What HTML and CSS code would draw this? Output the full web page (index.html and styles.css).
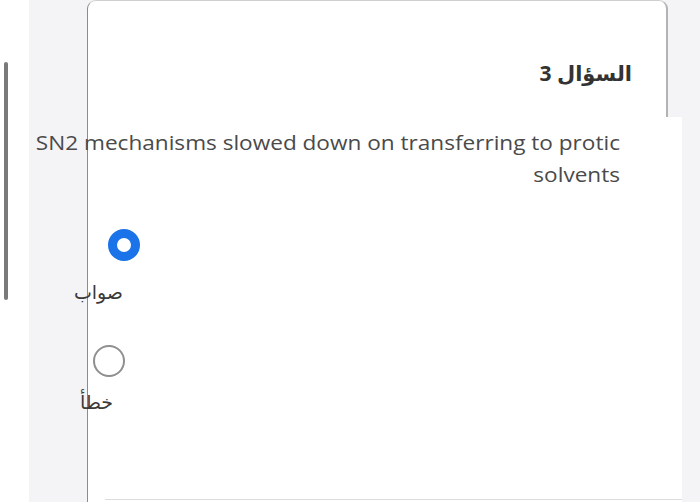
FILE: index.html
```html
<!DOCTYPE html>
<html lang="ar">
<head>
<meta charset="utf-8">
<link rel="stylesheet" href="styles.css">
</head>
<body>
<div class="page">
  <div class="rail"><div class="bar"></div></div>
  <div class="main">
    <div class="card-head">
      <h2 class="q-title" dir="rtl">السؤال 3</h2>
    </div>
    <div class="card-body">
      <p class="q-text">SN2 mechanisms slowed down on transferring to protic solvents</p>
      <div class="option opt-true">
        <span class="radio checked"></span>
        <span class="label" dir="rtl">صواب</span>
      </div>
      <div class="option opt-false">
        <span class="radio"></span>
        <span class="label" dir="rtl">خطأ</span>
      </div>
      <div class="foot-line"></div>
    </div>
  </div>
</div>
</body>
</html>
```
FILE: styles.css
```css
html, body {
  margin: 0;
  padding: 0;
}
body {
  width: 700px;
  height: 502px;
  overflow: hidden;
  background: #f4f4f6;
  font-family: "Open Sans", "Noto Sans", "DejaVu Sans", sans-serif;
}
.page {
  display: flex;
  height: 502px;
}
.rail {
  width: 29px;
  flex: none;
  background: #ffffff;
}
.bar {
  margin: 62px 0 0 4px;
  width: 4px;
  height: 238px;
  border-radius: 2px;
  background: #7a7a7a;
}
.main {
  flex: 1;
  display: flex;
  flex-direction: column;
}
.card-head {
  margin-left: 58px;
  width: 581px;
  height: 117px;
  box-sizing: border-box;
  background: #fff;
  border-top: 1px solid #cfcfcf;
  border-left: 1px solid #8c8c8c;
  border-right: 2px solid #b3b3b3;
  border-radius: 9px 9px 0 0;
  display: flex;
  justify-content: flex-end;
}
.q-title {
  margin: 57px 34px 0 0;
  font-size: 21px;
  line-height: 30px;
  font-weight: 700;
  color: #333;
}
.card-body {
  margin-left: 58px;
  width: 595px;
  flex: 1;
  box-sizing: border-box;
  background: #fff;
  border-left: 1px solid #8c8c8c;
  display: flex;
  flex-direction: column;
  align-items: flex-start;
}
.q-text {
  margin: 10px 0 0 12px;
  width: 520px;
  text-align: right;
  font-size: 20px;
  line-height: 32px;
  color: #4a4a4a;
  transform: scaleX(1.129);
  transform-origin: right top;
}
.option {
  display: flex;
  flex-direction: column;
  align-items: flex-start;
}
.radio {
  display: block;
  width: 32px;
  height: 32px;
  box-sizing: border-box;
  border-radius: 50%;
  border: 2px solid #8f8f8f;
  background: #fff;
}
.radio.checked {
  border: 9px solid #1a73e8;
}
.label {
  display: block;
  text-align: right;
  font-size: 19px;
  line-height: 26px;
  color: #3a3a3a;
}
.opt-true {
  margin: 38px 0 0 20px;
}
.opt-true .label {
  margin: 18px 0 0 -50px;
  width: 65px;
}
.opt-false {
  margin: 40px 0 0 5px;
}
.opt-false .label {
  margin: 12px 0 0 -35px;
  width: 55px;
}
.foot-line {
  margin: auto 0 2px 17px;
  width: 577px;
  height: 1px;
  background: #dcdcdc;
}
```
